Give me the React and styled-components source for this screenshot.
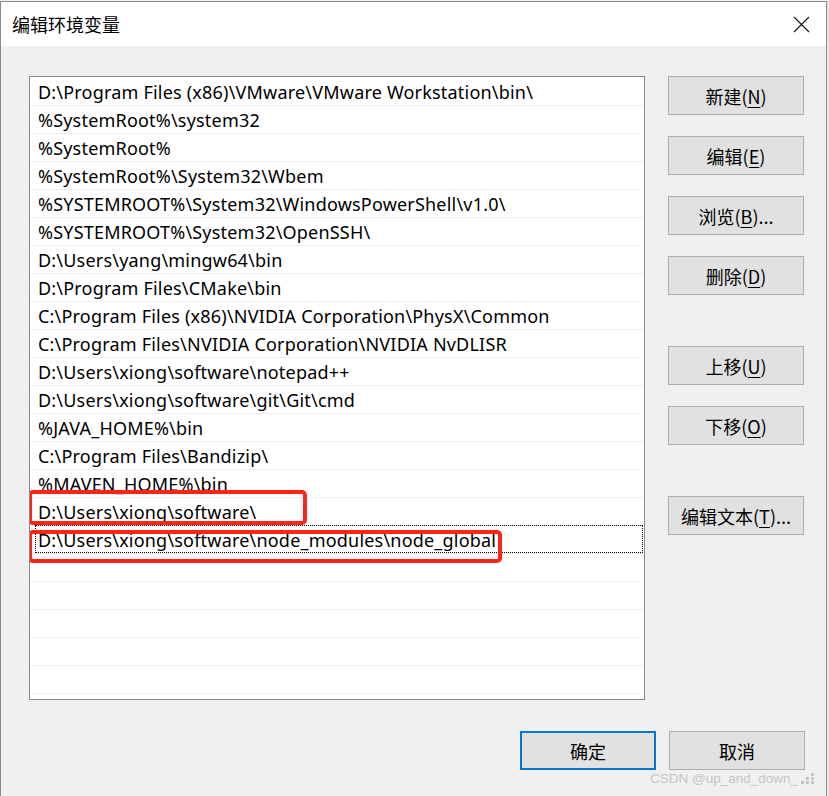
import React from "react";
import styled, { createGlobalStyle } from "styled-components";

const paths = [
  "D:\\Program Files (x86)\\VMware\\VMware Workstation\\bin\\",
  "%SystemRoot%\\system32",
  "%SystemRoot%",
  "%SystemRoot%\\System32\\Wbem",
  "%SYSTEMROOT%\\System32\\WindowsPowerShell\\v1.0\\",
  "%SYSTEMROOT%\\System32\\OpenSSH\\",
  "D:\\Users\\yang\\mingw64\\bin",
  "D:\\Program Files\\CMake\\bin",
  "C:\\Program Files (x86)\\NVIDIA Corporation\\PhysX\\Common",
  "C:\\Program Files\\NVIDIA Corporation\\NVIDIA NvDLISR",
  "D:\\Users\\xiong\\software\\notepad++",
  "D:\\Users\\xiong\\software\\git\\Git\\cmd",
  "%JAVA_HOME%\\bin",
  "C:\\Program Files\\Bandizip\\",
  "%MAVEN_HOME%\\bin",
  "D:\\Users\\xiong\\software\\",
  "D:\\Users\\xiong\\software\\node_modules\\node_global",
  "",
  "",
  "",
  "",
  "",
];

const sideButtons = [
  { label: "新建", key: "N", top: 0 },
  { label: "编辑", key: "E", top: 21 },
  { label: "浏览", key: "B", tail: "...", top: 21 },
  { label: "删除", key: "D", top: 21 },
  { label: "上移", key: "U", top: 51 },
  { label: "下移", key: "O", top: 21 },
  { label: "编辑文本", key: "T", tail: "...", top: 51 },
];

const GlobalStyle = createGlobalStyle`
  html, body {
    margin: 0;
    padding: 0;
    background: #f4f4f4;
    overflow: hidden;
  }
  body {
    font-family: "Noto Sans CJK SC", "Noto Sans", sans-serif;
  }
`;

const Screen = styled.div`
  width: 829px;
  height: 796px;
  padding-top: 1px;
  box-sizing: border-box;
  position: relative;
  overflow: hidden;
`;

const Dialog = styled.div`
  width: 827px;
  height: 800px;
  box-sizing: border-box;
  border: 1px solid #8a8a8a;
  border-bottom: none;
  background: #f0f0f0;
  display: flex;
  flex-direction: column;
`;

const TitleBar = styled.div`
  height: 44px;
  background: #ffffff;
  display: flex;
  align-items: center;
  justify-content: space-between;
  padding: 0 16px 0 11px;
`;

const Title = styled.div`
  font-size: 18px;
  color: #000;
  margin-top: -1px;
`;

const Close = styled.svg`
  width: 17px;
  height: 17px;
`;

const Body = styled.div`
  padding: 30px 0 0 28px;
  display: flex;
  flex-direction: column;
`;

const Main = styled.div`
  display: flex;
  align-items: flex-start;
  gap: 23px;
`;

const ListBox = styled.div`
  width: 616px;
  height: 624px;
  box-sizing: border-box;
  border: 1px solid #828790;
  background: #ffffff;
  padding: 1px;
  position: relative;
  overflow: hidden;
`;

const Row = styled.div`
  height: 28px;
  box-sizing: border-box;
  border-bottom: 1px solid #efefef;
  padding: 0 0 0 7px;
  display: flex;
  align-items: center;
  font-family: "Noto Sans", "Noto Sans CJK SC", sans-serif;
  font-size: 18px;
  letter-spacing: 0.2px;
  color: #000;
  white-space: nowrap;
  position: relative;
`;

const Focus = styled.div`
  position: absolute;
  left: 4px;
  right: 0;
  top: -1px;
  bottom: 0;
  border: 1px dotted #000;
`;

const Mark = styled.div`
  position: absolute;
  left: ${(p) => p.$left}px;
  top: ${(p) => p.$top}px;
  width: ${(p) => p.$width}px;
  height: ${(p) => p.$height}px;
  border: 4px solid #ff2318;
  border-radius: 5px;
  box-sizing: border-box;
`;

const SideColumn = styled.div`
  display: flex;
  flex-direction: column;
`;

const Button = styled.button`
  width: 136px;
  height: 39px;
  box-sizing: border-box;
  margin-top: ${(p) => p.$top || 0}px;
  border: ${(p) => (p.$primary ? "2px solid #0078d7" : "1px solid #adadad")};
  background: #e1e1e1;
  font-family: "Noto Sans CJK SC", "Noto Sans", sans-serif;
  font-size: 18px;
  color: #000;
  padding: 0;
  display: flex;
  align-items: center;
  justify-content: center;
  cursor: default;

  u {
    text-decoration-thickness: 1px;
    text-underline-offset: 3px;
  }
`;

const Footer = styled.div`
  display: flex;
  justify-content: flex-end;
  gap: 13px;
  margin-top: 31px;
  padding-right: 21px;
`;

const Watermark = styled.div`
  position: absolute;
  left: 650px;
  top: 771px;
  font-family: "Liberation Sans", "Noto Sans CJK SC", sans-serif;
  font-size: 13.5px;
  color: #c6c6c6;
  display: flex;
  align-items: center;
  gap: 3px;
  white-space: nowrap;
`;

const EdgeStrip = styled.div`
  position: absolute;
  left: 827px;
  top: 0;
  width: 2px;
  height: 796px;
  background: #e8e8e8;
`;

export default function App() {
  return (
    <Screen>
      <GlobalStyle />
      <Dialog>
        <TitleBar>
          <Title>编辑环境变量</Title>
          <Close viewBox="0 0 17 17">
            <path d="M1 1 L16 16 M16 1 L1 16" stroke="#111" strokeWidth="1.1" fill="none" />
          </Close>
        </TitleBar>
        <Body>
          <Main>
            <ListBox>
              {paths.map((p, i) => (
                <Row key={i}>
                  {i === 16 && <Focus />}
                  <span>{p}</span>
                </Row>
              ))}
              <Mark $left={-2} $top={413} $width={279} $height={35} />
              <Mark $left={-2} $top={453} $width={474} $height={33} />
            </ListBox>
            <SideColumn>
              {sideButtons.map((b) => (
                <Button key={b.key} $top={b.top}>
                  {b.label}(<u>{b.key}</u>){b.tail || ""}
                </Button>
              ))}
            </SideColumn>
          </Main>
          <Footer>
            <Button $primary>确定</Button>
            <Button>取消</Button>
          </Footer>
        </Body>
      </Dialog>
      <EdgeStrip />
      <Watermark>
        CSDN @up_and_down_
        <svg width="13" height="11" viewBox="0 0 13 11">
          <rect x="10" y="0" width="3" height="3" fill="#c6c6c6" />
          <rect x="5" y="4" width="3" height="3" fill="#c6c6c6" />
          <rect x="10" y="4" width="3" height="3" fill="#c6c6c6" />
          <rect x="0" y="8" width="3" height="3" fill="#c6c6c6" />
          <rect x="5" y="8" width="3" height="3" fill="#c6c6c6" />
          <rect x="10" y="8" width="3" height="3" fill="#c6c6c6" />
        </svg>
      </Watermark>
    </Screen>
  );
}
